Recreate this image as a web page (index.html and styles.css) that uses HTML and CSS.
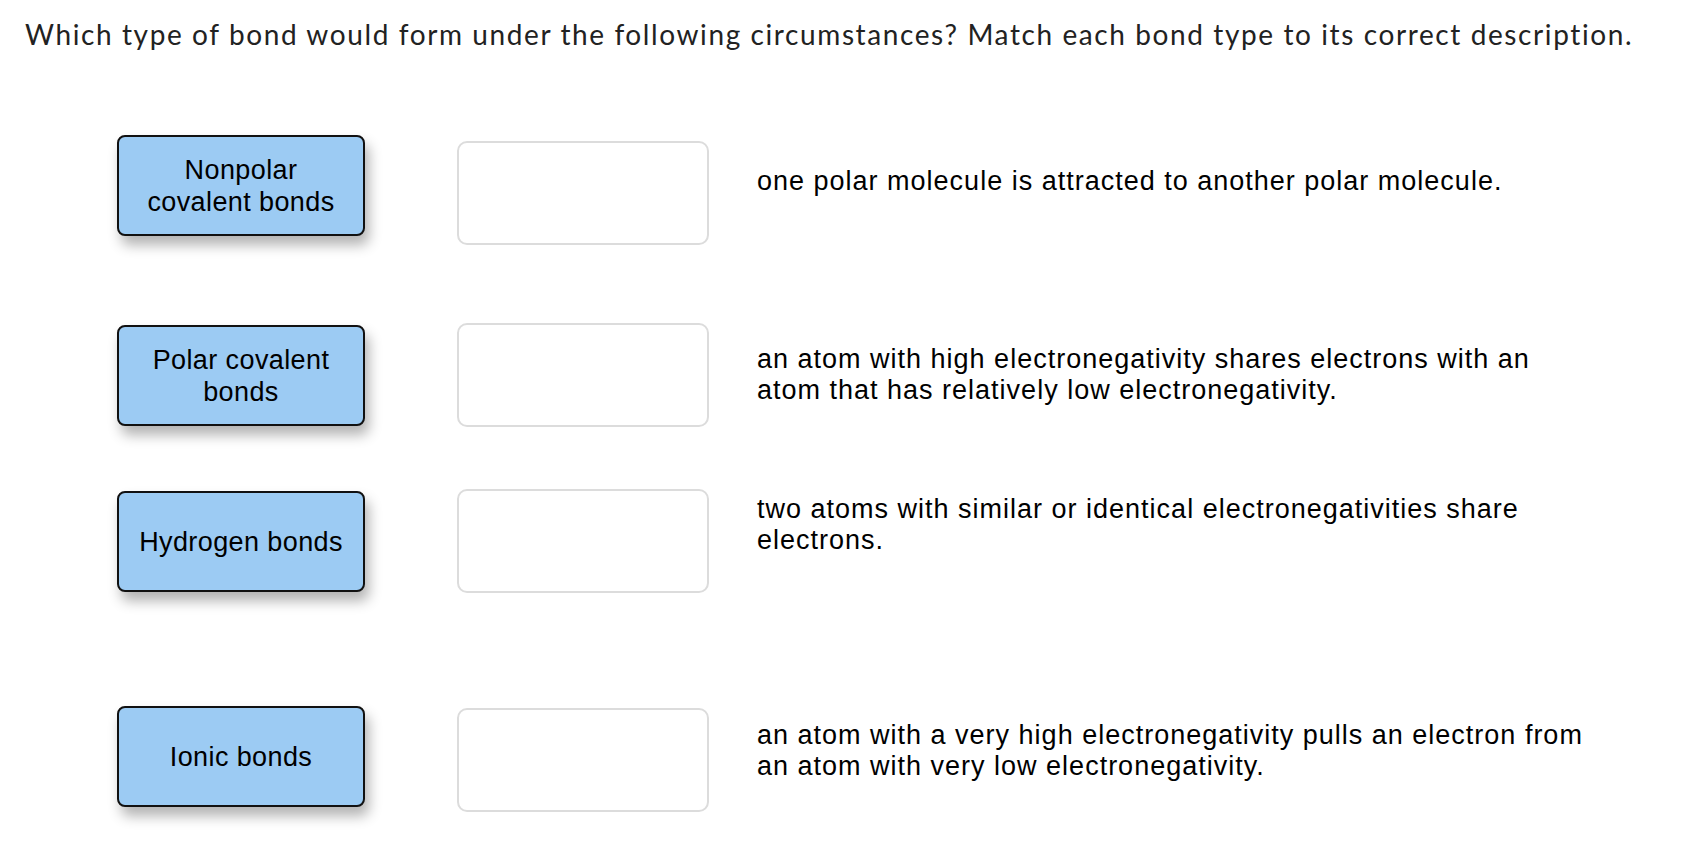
FILE: index.html
```html
<!DOCTYPE html>
<html>
<head>
<meta charset="utf-8">
<link rel="stylesheet" href="styles.css">
</head>
<body>
<h1 class="prompt">Which type of bond would form under the following circumstances? Match each bond type to its correct description.</h1>
<div class="board">
  <div class="row row-1">
    <div class="card">Nonpolar covalent bonds</div>
    <div class="drop"></div>
    <p class="desc">one polar molecule is attracted to another polar molecule.</p>
  </div>
  <div class="row row-2">
    <div class="card">Polar covalent bonds</div>
    <div class="drop"></div>
    <p class="desc">an atom with high electronegativity shares electrons with an atom that has relatively low electronegativity.</p>
  </div>
  <div class="row row-3">
    <div class="card">Hydrogen bonds</div>
    <div class="drop"></div>
    <p class="desc">two atoms with similar or identical electronegativities share electrons.</p>
  </div>
  <div class="row row-4">
    <div class="card">Ionic bonds</div>
    <div class="drop"></div>
    <p class="desc">an atom with a very high electronegativity pulls an electron from an atom with very low electronegativity.</p>
  </div>
</div>
</body>
</html>
```
FILE: styles.css
```css
html, body {
  margin: 0;
  padding: 0;
  background: #fff;
}

.prompt {
  margin: 18px 0 0 25px;
  font-family: Lato, "Open Sans", sans-serif;
  font-weight: 400;
  font-size: 28px;
  line-height: 32px;
  letter-spacing: 1.6px;
  color: #222;
  white-space: nowrap;
}

.board {
  display: flex;
  flex-direction: column;
  padding-left: 117px;
  padding-bottom: 26px;
}

.row {
  display: flex;
  align-items: flex-start;
}

.card {
  box-sizing: border-box;
  width: 248px;
  height: 101px;
  margin-right: 92px;
  padding: 0 14px;
  display: flex;
  align-items: center;
  justify-content: center;
  text-align: center;
  background: #9ccbf3;
  border: 2px solid #111;
  border-radius: 8px;
  box-shadow: 4px 9px 13px rgba(0, 0, 0, 0.3);
  font-family: "Liberation Sans", Arial, sans-serif;
  font-size: 27px;
  line-height: 32px;
  letter-spacing: 0.4px;
  color: #000;
  flex: none;
}

.drop {
  box-sizing: border-box;
  width: 252px;
  height: 104px;
  margin-right: 48px;
  border: 2px solid #dcdcdc;
  border-radius: 10px;
  background: #fff;
  flex: none;
}

.desc {
  margin: 0;
  max-width: 840px;
  font-family: "Liberation Sans", Arial, sans-serif;
  font-size: 27px;
  line-height: 31px;
  letter-spacing: 1px;
  color: #000;
}

.row-1 { margin-top: 85px; }
.row-1 .drop { margin-top: 6px; }
.row-1 .desc { margin-top: 31px; }

.row-2 { margin-top: 78px; }
.row-2 .card { margin-top: 2px; }
.row-2 .desc { margin-top: 21px; }

.row-3 { margin-top: 62px; }
.row-3 .card { margin-top: 2px; }
.row-3 .desc { margin-top: 5px; }

.row-4 { margin-top: 113px; }
.row-4 .drop { margin-top: 2px; }
.row-4 .desc { margin-top: 14px; }
```
